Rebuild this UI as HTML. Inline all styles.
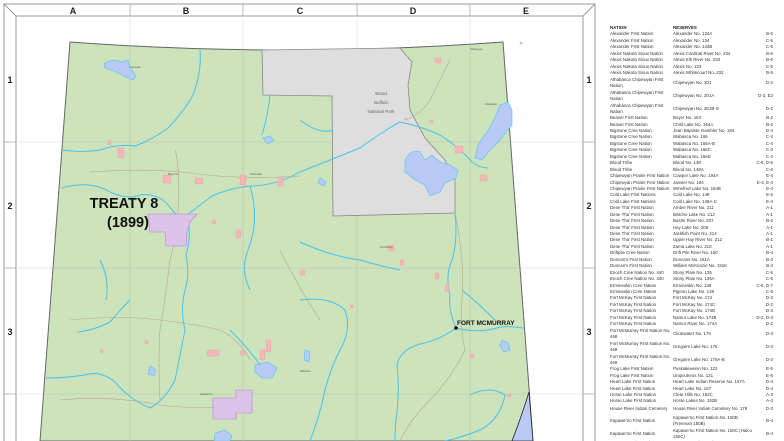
<!DOCTYPE html>
<html><head><meta charset="utf-8"><style>
html,body{margin:0;padding:0;background:#fff;width:784px;height:441px;overflow:hidden;font-family:"Liberation Sans",sans-serif}
#map{position:absolute;left:0;top:0}
#tbl{position:absolute;left:610px;top:25px;width:163px;font-size:4.4px;color:#333;height:416px;overflow:hidden}
.r{display:flex;box-sizing:border-box;height:6.45px;line-height:6.45px;align-items:center;overflow:hidden;white-space:nowrap}
.r span{overflow:hidden}
.r span:nth-child(1){width:63px;flex:none}
.r span:nth-child(2){width:80px;flex:none}
.r span:nth-child(3){flex:1;text-align:right}
.d{height:12.9px}
.d span{white-space:normal;line-height:6.2px}
.m{height:9.5px}
.h{font-weight:bold;color:#222}
</style></head><body>
<svg id="map" width="600" height="441" viewBox="0 0 600 441">
<rect x="4" y="4" width="591" height="440" fill="none" stroke="#999" stroke-width="1"/>
<line x1="16" y1="16" x2="583" y2="16" stroke="#999"/>
<line x1="16" y1="16" x2="16" y2="441" stroke="#999"/>
<line x1="583" y1="16" x2="583" y2="441" stroke="#999"/>
<line x1="4" y1="4" x2="16" y2="16" stroke="#999"/>
<line x1="595" y1="4" x2="583" y2="16" stroke="#999"/>
<g stroke="#aaa" stroke-width="0.8">
<line x1="130" y1="4" x2="130" y2="16"/><line x1="243" y1="4" x2="243" y2="16"/><line x1="357" y1="4" x2="357" y2="16"/><line x1="470" y1="4" x2="470" y2="16"/>
<line x1="4" y1="142" x2="16" y2="142"/><line x1="4" y1="268" x2="16" y2="268"/><line x1="4" y1="394" x2="16" y2="394"/>
<line x1="583" y1="142" x2="595" y2="142"/><line x1="583" y1="268" x2="595" y2="268"/><line x1="583" y1="394" x2="595" y2="394"/>
</g>
<g font-family="Liberation Sans" font-weight="bold" font-size="9" text-anchor="middle" fill="#222">
<text x="73" y="14">A</text><text x="186" y="14">B</text><text x="300" y="14">C</text><text x="413" y="14">D</text><text x="526" y="14">E</text>
<text x="10" y="83">1</text><text x="10" y="209">2</text><text x="10" y="335">3</text>
<text x="589" y="83">1</text><text x="589" y="209">2</text><text x="589" y="335">3</text>
</g>
<g stroke="#e4e4e4" stroke-width="0.8">
<line x1="130" y1="16" x2="130" y2="441"/><line x1="243" y1="16" x2="243" y2="441"/><line x1="357" y1="16" x2="357" y2="441"/><line x1="470" y1="16" x2="470" y2="441"/>
<line x1="16" y1="142" x2="583" y2="142"/><line x1="16" y1="268" x2="583" y2="268"/><line x1="16" y1="394" x2="583" y2="394"/>
</g>
<path d="M70,42 Q287,58 503,42 L533,441 L40,441 Z" fill="#cde3bb" stroke="#666" stroke-width="1"/>
<g stroke="#b5c5a5" stroke-width="0.6">
<line x1="130" y1="45" x2="130" y2="441"/><line x1="243" y1="48" x2="243" y2="441"/><line x1="357" y1="48" x2="357" y2="441"/><line x1="470" y1="44" x2="470" y2="441"/>
<line x1="60" y1="142" x2="512" y2="142"/><line x1="50" y1="268" x2="521" y2="268"/><line x1="43" y1="394" x2="529" y2="394"/>
</g>
<path d="M262,50 L400,48 L412,62 L408,85 L410,110 L425,138 L445,160 L455,180 L455,213 L333,216 L332,96 L263,95 Z" fill="#dedede" stroke="#888" stroke-width="0.8"/>
<g font-family="Liberation Sans" font-size="4.5" fill="#666" text-anchor="middle"><text x="381" y="95">Wood</text><text x="381" y="104">Buffalo</text><text x="381" y="113">National Park</text></g>
<g fill="#b9caf6" stroke="#4cc6f0" stroke-width="0.6">
<path d="M104,64 Q112,58 122,62 L128,60 L130,68 L136,76 L133,80 L124,76 L114,71 L105,68 Z"/>
<path d="M405,160 Q412,148 420,152 L425,160 L432,155 L440,162 L450,165 L458,170 L456,178 L445,183 L440,192 L430,196 L425,185 L415,180 L405,172 Z"/>
<path d="M500,105 L508,102 L512,110 L512,125 L500,140 L490,150 L482,160 L475,158 L478,145 L488,130 L495,118 Z"/>
<path d="M512,441 Q522,415 529,392 L533,441 Z" stroke="#222" stroke-width="0.8"/>
<path d="M502,340 L508,343 L510,350 L504,352 L500,346 Z"/>
<path d="M255,365 L268,362 L277,368 L272,378 L262,378 L255,372 Z"/>
<path d="M150,366 L156,370 L154,376 L148,374 Z"/>
<path d="M305,350 L310,352 L309,362 L304,360 Z"/>
<path d="M263,138 L270,136 L274,140 L268,144 Z"/>
<path d="M320,178 L326,182 L324,186 L318,183 Z"/>
<path d="M215,433 L225,430 L232,436 L230,441 L214,441 Z"/>
</g>
<g fill="none" stroke="#47c3ee" stroke-width="1">
<path d="M200,50 Q202,70 193,95 Q185,110 168,128 Q152,140 135,146 Q115,144 100,150 Q82,153 62,150"/>
<path d="M62,188 Q90,180 110,192 Q128,200 140,195 Q160,192 172,210 Q185,225 187,215 Q200,205 212,196 Q230,188 250,186 Q275,186 300,172 Q330,160 360,148 Q385,130 400,122 Q420,126 440,135 Q460,148 472,162 Q480,168 488,168"/>
<path d="M187,215 Q192,235 186,255 Q190,275 185,290 Q180,310 185,330 Q180,355 175,380 Q165,400 150,408 Q130,400 115,382 Q100,370 85,375 Q65,378 46,378"/>
<path d="M130,300 Q120,310 110,322 Q95,330 78,332"/>
<path d="M456,328 Q448,310 450,295 Q445,275 452,260 Q458,240 455,213"/>
<path d="M456,328 Q440,340 420,344 Q400,350 397,365 Q400,390 396,420 Q395,432 395,441"/>
<path d="M456,328 Q480,334 500,327 Q512,326 523,328"/>
<path d="M300,242 Q330,256 360,260 Q380,266 400,270"/>
<path d="M300,300 Q330,296 345,310 Q352,330 340,350 Q330,370 325,390 Q320,415 310,441"/>
<path d="M250,186 Q260,220 248,250 Q240,270 250,290"/>
<path d="M462,290 Q480,305 495,320"/>
<path d="M470,395 Q490,385 505,395 Q500,420 480,430 Q460,438 445,441"/>
<path d="M100,260 Q110,280 106,300"/>
<path d="M300,120 Q320,135 333,130"/>
<path d="M270,95 Q268,115 262,135"/>
<path d="M230,330 Q250,350 260,365"/>
</g>
<g fill="none" stroke="#b4a88e" stroke-width="0.6">
<path d="M90,172 Q150,168 190,173 Q240,180 300,176"/>
<path d="M175,150 Q180,165 178,210 Q176,240 170,260 Q165,300 160,330 Q158,360 160,400"/>
<path d="M405,120 Q420,115 430,100 Q440,80 450,60"/>
<path d="M455,213 Q465,260 462,300 Q460,330 465,350 Q450,380 430,400 Q410,420 400,441"/>
<path d="M70,320 Q120,315 160,320 Q200,325 220,330 Q240,340 250,360"/>
<path d="M60,400 Q110,395 160,405 Q200,410 240,405"/>
<path d="M280,250 Q300,290 320,320"/>
</g>
<g fill="#f4b6b8" stroke="#e79aa0" stroke-width="0.3">
<rect x="163" y="175" width="8" height="8"/><rect x="118" y="148" width="6" height="10"/><rect x="108" y="140" width="3" height="5"/>
<rect x="195" y="178" width="8" height="6"/><rect x="240" y="175" width="6" height="10"/><rect x="278" y="177" width="5" height="9"/>
<rect x="212" y="220" width="4" height="4"/><rect x="236" y="230" width="5" height="8"/>
<rect x="388" y="245" width="6" height="6"/><rect x="400" y="260" width="4" height="5"/><rect x="435" y="273" width="4" height="6"/><rect x="445" y="285" width="4" height="6"/>
<rect x="470" y="354" width="4" height="4"/><rect x="507" y="394" width="4" height="3"/>
<rect x="350" y="305" width="3" height="3"/><rect x="260" y="350" width="5" height="10"/><rect x="207" y="350" width="12" height="6"/>
<rect x="520" y="42" width="2" height="2"/><rect x="435" y="58" width="6" height="5"/><rect x="455" y="146" width="8" height="7"/>
<rect x="480" y="175" width="7" height="6"/><rect x="430" y="120" width="3" height="3"/><rect x="405" y="118" width="2" height="2"/>
<rect x="240" y="351" width="5" height="4"/><rect x="266" y="340" width="5" height="12"/><rect x="145" y="340" width="3" height="4"/>
<rect x="100" y="350" width="3" height="3"/><rect x="300" y="270" width="5" height="5"/>
</g>
<g fill="#dcc3ea" stroke="#c07ed8" stroke-width="0.6">
<path d="M148,214 L197,214 L190,222 L187,232 L186,246 L166,246 L165,232 L150,232 Z"/>
<path d="M213,398 L236,398 L236,390 L252,390 L252,413 L236,413 L236,419 L213,419 Z"/>
</g>
<g font-family="Liberation Sans" font-weight="bold" fill="#111" text-anchor="middle" font-size="14.5">
<text x="124" y="208">TREATY 8</text><text x="128" y="227">(1899)</text>
</g>
<circle cx="456" cy="328" r="1.8" fill="#000"/>
<text x="457" y="325" font-family="Liberation Sans" font-weight="bold" font-size="6.5" fill="#111">FORT MCMURRAY</text>
<g font-family="Liberation Sans" font-size="2.5" fill="#555">
<text x="130" y="68">Hay Lake</text><text x="168" y="175">Boyer No.</text><text x="250" y="175">Child Lake</text><text x="300" y="372">Wabasca</text><text x="380" y="248">Fort McKay</text><text x="470" y="50">Chipewyan</text><text x="485" y="105">Chipewyan</text><text x="200" y="395">Kapawe'no</text>
</g>
</svg>
<div id="tbl">
<div class="r h"><span>NATION</span><span>RESERVES</span><span></span></div>
<div class="r"><span>Alexander First Nation</span><span>Alexander No. 134A</span><span>B-5</span></div>
<div class="r"><span>Alexander First Nation</span><span>Alexander No. 134</span><span>C-5</span></div>
<div class="r"><span>Alexander First Nation</span><span>Alexander No. 134B</span><span>C-5</span></div>
<div class="r"><span>Alexis Nakota Sioux Nation</span><span>Alexis Cardinal River No. 234</span><span>B-6</span></div>
<div class="r"><span>Alexis Nakota Sioux Nation</span><span>Alexis Elk River No. 233</span><span>B-6</span></div>
<div class="r"><span>Alexis Nakota Sioux Nation</span><span>Alexis No. 133</span><span>C-5</span></div>
<div class="r"><span>Alexis Nakota Sioux Nation</span><span>Alexis Whitecourt No. 232</span><span>B-5</span></div>
<div class="r d"><span>Athabasca Chipewyan First Nation</span><span>Chipewyan No. 201</span><span>D-2</span></div>
<div class="r d"><span>Athabasca Chipewyan First Nation</span><span>Chipewyan No. 201A</span><span>D-2, E2</span></div>
<div class="r d"><span>Athabasca Chipewyan First Nation</span><span>Chipewyan No. 201B-G</span><span>D-2</span></div>
<div class="r"><span>Beaver First Nation</span><span>Boyer No. 164</span><span>B-2</span></div>
<div class="r"><span>Beaver First Nation</span><span>Child Lake No. 164A</span><span>B-2</span></div>
<div class="r"><span>Bigstone Cree Nation</span><span>Jean Baptiste Gambler No. 183</span><span>D-4</span></div>
<div class="r"><span>Bigstone Cree Nation</span><span>Wabasca No. 166</span><span>C-3</span></div>
<div class="r"><span>Bigstone Cree Nation</span><span>Wabasca No. 166A-B</span><span>C-4</span></div>
<div class="r"><span>Bigstone Cree Nation</span><span>Wabasca No. 166C</span><span>C-3</span></div>
<div class="r"><span>Bigstone Cree Nation</span><span>Wabasca No. 166D</span><span>C-4</span></div>
<div class="r"><span>Blood Tribe</span><span>Blood No. 148</span><span>C-6, D-6</span></div>
<div class="r"><span>Blood Tribe</span><span>Blood No. 148A</span><span>C-6</span></div>
<div class="r"><span>Chipewyan Prairie First Nation</span><span>Cowper Lake No. 194A</span><span>E-4</span></div>
<div class="r"><span>Chipewyan Prairie First Nation</span><span>Janvier No. 194</span><span>E-3, E-4</span></div>
<div class="r"><span>Chipewyan Prairie First Nation</span><span>Winefred Lake No. 194B</span><span>E-4</span></div>
<div class="r"><span>Cold Lake First Nations</span><span>Cold Lake No. 149</span><span>E-5</span></div>
<div class="r"><span>Cold Lake First Nations</span><span>Cold Lake No. 149A-C</span><span>E-4</span></div>
<div class="r"><span>Dene Tha' First Nation</span><span>Amber River No. 211</span><span>A-1</span></div>
<div class="r"><span>Dene Tha' First Nation</span><span>Bistcho Lake No. 213</span><span>A-1</span></div>
<div class="r"><span>Dene Tha' First Nation</span><span>Bushe River No. 207</span><span>B-2</span></div>
<div class="r"><span>Dene Tha' First Nation</span><span>Hay Lake No. 209</span><span>A-1</span></div>
<div class="r"><span>Dene Tha' First Nation</span><span>Jackfish Point No. 214</span><span>A-1</span></div>
<div class="r"><span>Dene Tha' First Nation</span><span>Upper Hay River No. 212</span><span>B-1</span></div>
<div class="r"><span>Dene Tha' First Nation</span><span>Zama Lake No. 210</span><span>A-1</span></div>
<div class="r"><span>Driftpile Cree Nation</span><span>Drift Pile River No. 150</span><span>B-4</span></div>
<div class="r"><span>Duncan's First Nation</span><span>Duncans No. 151A</span><span>B-3</span></div>
<div class="r"><span>Duncan's First Nation</span><span>William McKenzie No. 151K</span><span>B-4</span></div>
<div class="r"><span>Enoch Cree Nation No. 440</span><span>Stony Plain No. 135</span><span>C-5</span></div>
<div class="r"><span>Enoch Cree Nation No. 440</span><span>Stony Plain No. 135A</span><span>C-5</span></div>
<div class="r"><span>Ermineskin Cree Nation</span><span>Ermineskin No. 138</span><span>C-6, D-7</span></div>
<div class="r"><span>Ermineskin Cree Nation</span><span>Pigeon Lake No. 138</span><span>C-6</span></div>
<div class="r"><span>Fort McKay First Nation</span><span>Fort McKay No. 174</span><span>D-3</span></div>
<div class="r"><span>Fort McKay First Nation</span><span>Fort McKay No. 174C</span><span>D-2</span></div>
<div class="r"><span>Fort McKay First Nation</span><span>Fort McKay No. 174D</span><span>D-3</span></div>
<div class="r"><span>Fort McKay First Nation</span><span>Namur Lake No. 174B</span><span>D-2, D-3</span></div>
<div class="r"><span>Fort McKay First Nation</span><span>Namur River No. 174A</span><span>D-2</span></div>
<div class="r d"><span>Fort McMurray First Nation No. 468</span><span>Clearwater No. 175</span><span>D-3</span></div>
<div class="r d"><span>Fort McMurray First Nation No. 468</span><span>Gregoire Lake No. 176</span><span>D-3</span></div>
<div class="r d"><span>Fort McMurray First Nation No. 468</span><span>Gregoire Lake No. 176A-B</span><span>D-3</span></div>
<div class="r"><span>Frog Lake First Nation</span><span>Puskiakiwenin No. 122</span><span>E-5</span></div>
<div class="r"><span>Frog Lake First Nation</span><span>Unipouheos No. 121</span><span>E-5</span></div>
<div class="r"><span>Heart Lake First Nation</span><span>Heart Lake Indian Reserve No. 167A</span><span>D-4</span></div>
<div class="r"><span>Heart Lake First Nation</span><span>Heart Lake No. 167</span><span>D-4</span></div>
<div class="r"><span>Horse Lake First Nation</span><span>Clear Hills No. 152C</span><span>A-3</span></div>
<div class="r"><span>Horse Lake First Nation</span><span>Horse Lakes No. 152B</span><span>A-4</span></div>
<div class="r m"><span>House River Indian Cemetery</span><span>House River Indian Cemetery No. 178</span><span>D-3</span></div>
<div class="r d"><span>Kapawe'no First Nation</span><span>Kapawe'no First Nation No. 150B (Freeman 150B)</span><span>B-4</span></div>
<div class="r d"><span>Kapawe'no First Nation</span><span>Kapawe'no First Nation No. 150C (Halco 150C)</span><span>B-4</span></div>
<div class="r"><span>Kapawe'no First Nation</span><span>Kapawe'no First Nation No. 150D</span><span>B-4</span></div>
</div>
</body></html>
